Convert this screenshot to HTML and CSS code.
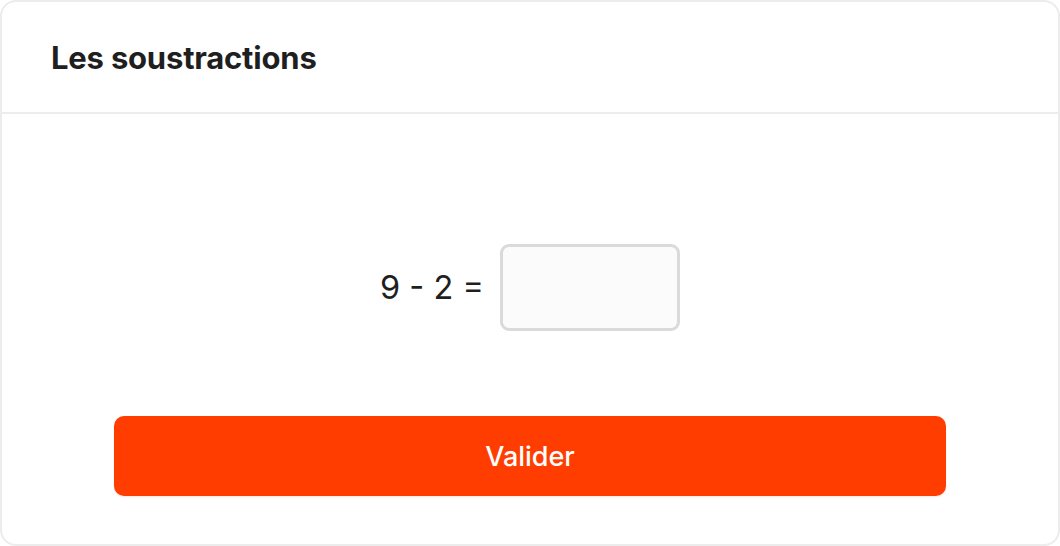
FILE: index.html
```html
<!DOCTYPE html>
<html lang="fr">
<head>
<meta charset="utf-8">
<title>Les soustractions</title>
<link rel="stylesheet" href="styles.css">
</head>
<body>
<div class="card">
  <header class="card-header">
    <h1 class="title">Les soustractions</h1>
  </header>
  <main class="card-body">
    <div class="equation">
      <span class="expr">9 - 2 =</span>
      <input class="answer" type="text" aria-label="Réponse">
    </div>
    <button class="submit" type="button">Valider</button>
  </main>
</div>
</body>
</html>
```
FILE: styles.css
```css
html, body {
  margin: 0;
  padding: 0;
  background: #ffffff;
}
body {
  font-family: Inter, "Noto Sans", "Liberation Sans", sans-serif;
  color: #1f1f1f;
}
.card {
  box-sizing: border-box;
  width: 1060px;
  height: 546px;
  border: 2px solid #ececec;
  border-radius: 16px;
  background: #ffffff;
  display: flex;
  flex-direction: column;
}
.card-header {
  box-sizing: border-box;
  height: 112px;
  border-bottom: 2px solid #ededed;
  display: flex;
  align-items: center;
  padding-left: 49px;
}
.title {
  margin: 0;
  font-size: 31px;
  font-weight: 700;
  letter-spacing: -0.2px;
  color: #1f1f1f;
}
.card-body {
  flex: 1;
  display: flex;
  flex-direction: column;
  align-items: center;
  padding-top: 130px;
}
.equation {
  display: flex;
  align-items: center;
  gap: 16px;
}
.expr {
  font-size: 32.5px;
  font-weight: 400;
  color: #1f1f1f;
}
.answer {
  box-sizing: border-box;
  width: 180px;
  height: 87px;
  border: 3px solid #dadada;
  border-radius: 9px;
  background: #fbfbfb;
  outline: none;
  font-family: inherit;
  font-size: 30px;
  text-align: center;
}
.submit {
  margin-top: 85px;
  width: 832px;
  height: 80px;
  border: none;
  border-radius: 10px;
  background: #ff3d00;
  color: #ffffff;
  font-family: inherit;
  font-size: 27px;
  font-weight: 500;
  box-shadow: 0 1px 2px rgba(255, 61, 0, 0.12);
  cursor: pointer;
}
```
